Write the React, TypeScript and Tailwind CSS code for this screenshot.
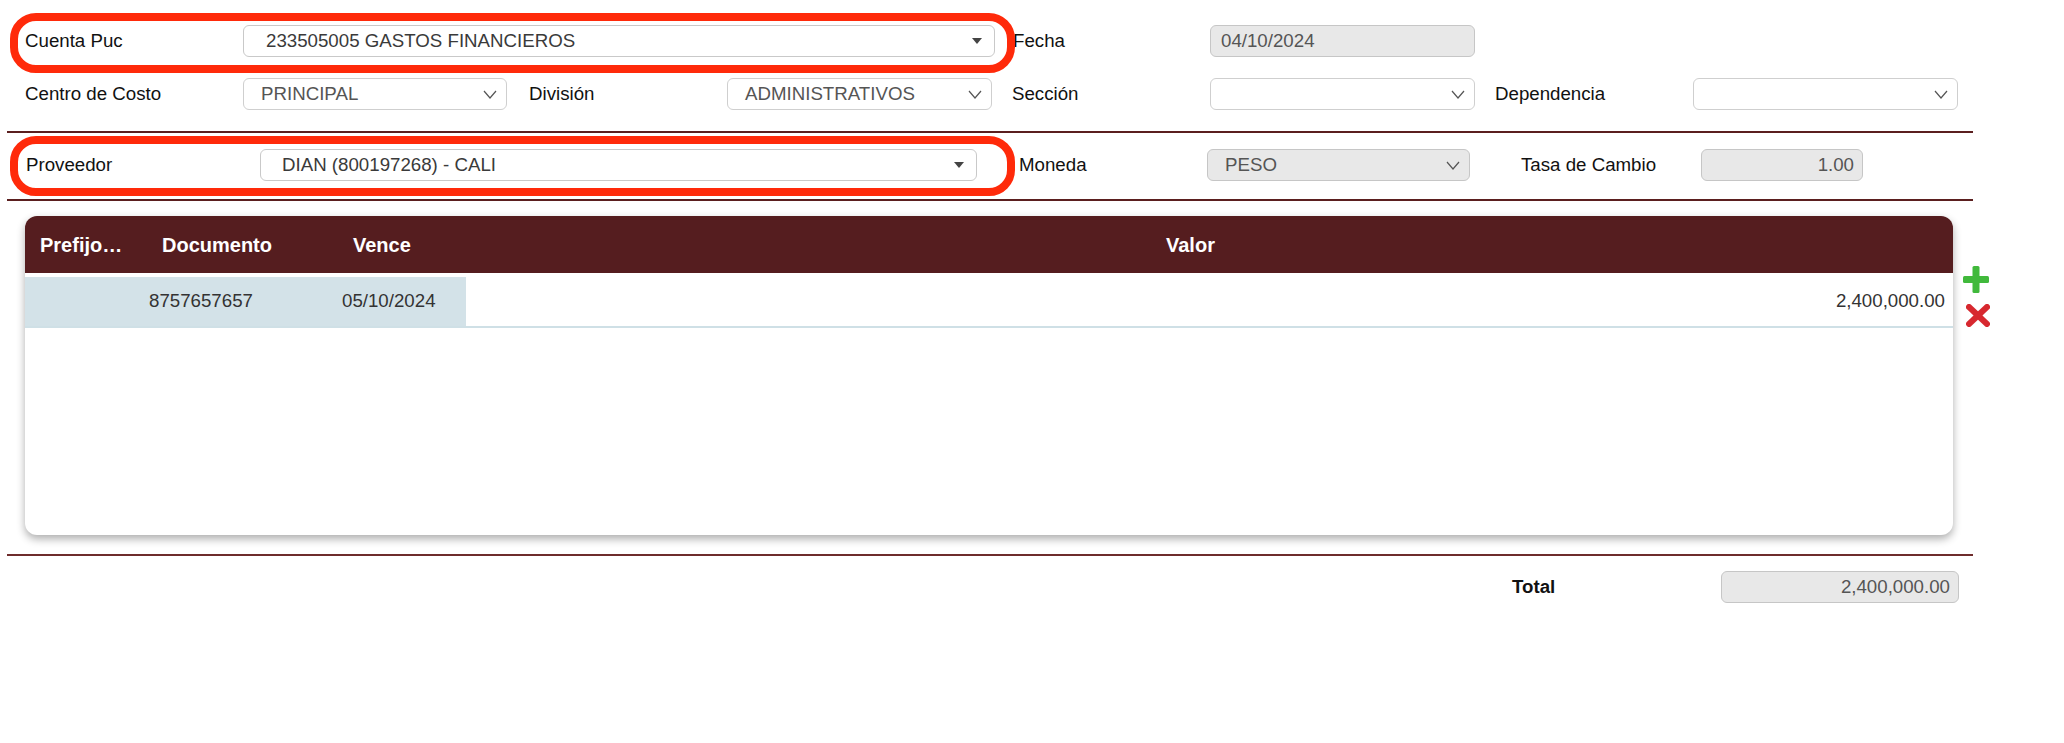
import React from "react";

function Label({ text, w, bold }: { text: string; w: number; bold?: boolean }) {
  return (
    <div style={{ width: w }} className={`shrink-0 text-[#111] ${bold ? "font-bold" : ""}`}>
      {text}
    </div>
  );
}

function Combo({ value, w, pl = 22 }: { value: string; w: number; pl?: number }) {
  return (
    <div
      style={{ width: w, paddingLeft: pl }}
      className="shrink-0 h-[32px] rounded-[6px] border border-[#c9c9c9] bg-white flex items-center justify-between pr-[12px] text-[#3a3a3a]"
    >
      <span>{value}</span>
      <svg width="10" height="6" viewBox="0 0 10 6">
        <polygon points="0,0 10,0 5,6" fill="#444" />
      </svg>
    </div>
  );
}

function Select({ value, w, disabled }: { value?: string; w: number; disabled?: boolean }) {
  return (
    <div
      style={{ width: w }}
      className={`shrink-0 h-[32px] rounded-[6px] border flex items-center justify-between pl-[17px] pr-[9px] text-[#555] ${
        disabled ? "bg-[#e8e8e8] border-[#c6c6c6]" : "bg-white border-[#cfcfcf]"
      }`}
    >
      <span>{value}</span>
      <svg width="14" height="9" viewBox="0 0 14 9">
        <polyline points="1,1 7,8 13,1" fill="none" stroke="#555" strokeWidth="1.2" />
      </svg>
    </div>
  );
}

function ReadInput({ value, w, right }: { value: string; w: number; right?: boolean }) {
  return (
    <div
      style={{ width: w }}
      className={`shrink-0 h-[32px] rounded-[6px] border border-[#c6c6c6] bg-[#e8e8e8] flex items-center px-[8px] text-[#555] ${
        right ? "justify-end" : "pl-[10px]"
      }`}
    >
      {value}
    </div>
  );
}

export default function App() {
  return (
    <div className="w-[2064px] h-[743px] bg-white font-['Liberation_Sans',Arial,sans-serif] text-[18.7px] leading-none">
      <div className="relative ml-[7px] w-[1966px]">
        {/* annotation boxes */}
        <div className="absolute left-[3px] top-[13px] w-[1005px] h-[60px] rounded-[26px] border-[8px] border-[#ff2a0a] pointer-events-none" />
        <div className="absolute left-[3px] top-[136px] w-[1005px] h-[60px] rounded-[26px] border-[8px] border-[#ff2a0a] pointer-events-none" />

        {/* Header fields */}
        <section className="pt-[25px] pb-[21px] pl-[18px] flex flex-col gap-[21px]">
          <div className="flex items-center">
            <Label text="Cuenta Puc" w={218} />
            <Combo value="233505005 GASTOS FINANCIEROS" w={752} />
            <div className="w-[18px] shrink-0" />
            <Label text="Fecha" w={197} />
            <ReadInput value="04/10/2024" w={265} />
          </div>
          <div className="flex items-center">
            <Label text="Centro de Costo" w={218} />
            <Select value="PRINCIPAL" w={264} />
            <div className="w-[22px] shrink-0" />
            <Label text="División" w={198} />
            <Select value="ADMINISTRATIVOS" w={265} />
            <div className="w-[20px] shrink-0" />
            <Label text="Sección" w={198} />
            <Select w={265} />
            <div className="w-[20px] shrink-0" />
            <Label text="Dependencia" w={198} />
            <Select w={265} />
          </div>
        </section>

        <div className="h-[2px] bg-[#5b1f1f]" />

        {/* Proveedor */}
        <section className="pt-[16px] pb-[18px] pl-[19px] flex items-center">
          <Label text="Proveedor" w={234} />
          <Combo value="DIAN (800197268) - CALI" w={717} pl={21} />
          <div className="w-[42px] shrink-0" />
          <Label text="Moneda" w={188} />
          <Select value="PESO" w={263} disabled />
          <div className="w-[51px] shrink-0" />
          <Label text="Tasa de Cambio" w={180} />
          <ReadInput value="1.00" w={162} right />
        </section>

        <div className="h-[2px] bg-[#5b1f1f]" />

        {/* Detail grid */}
        <section className="pt-[15px] pb-[19px] pl-[18px] flex">
          <div className="w-[1928px] h-[319px] shrink-0 rounded-[12px] bg-white shadow-[0_4px_9px_rgba(0,0,0,0.32)] overflow-hidden">
            <div className="h-[57px] bg-[#551d1f] text-white font-bold text-[20px] flex items-center">
              <div className="w-[115px] pl-[15px]">Prefijo…</div>
              <div className="w-[185px] pl-[22px]">Documento</div>
              <div className="w-[141px] pl-[28px]">Vence</div>
              <div className="flex-1 pl-[700px]">Valor</div>
            </div>
            <div className="mt-[4px] h-[51px] border-b-2 border-[#cfe0e6] flex items-center text-[#333]">
              <div className="w-[441px] h-full bg-[#d3e2e8] flex items-center">
                <div className="w-[115px]" />
                <div className="w-[185px] pl-[9px]">8757657657</div>
                <div className="w-[141px] pl-[17px]">05/10/2024</div>
              </div>
              <div className="flex-1 text-right pr-[8px]">2,400,000.00</div>
            </div>
          </div>
          <div className="ml-[10px] pt-[50px] shrink-0 flex flex-col gap-[11px]">
            <svg width="26" height="27" viewBox="0 0 26 27">
              <rect x="9.5" y="0" width="7" height="27" rx="1.5" fill="#41b93c" />
              <rect x="0" y="10" width="26" height="7" rx="1.5" fill="#41b93c" />
            </svg>
            <svg width="24" height="23" viewBox="0 0 24 23" className="ml-[3px]">
              <line x1="3" y1="3" x2="21" y2="20" stroke="#d7282f" strokeWidth="6" strokeLinecap="round" />
              <line x1="21" y1="3" x2="3" y2="20" stroke="#d7282f" strokeWidth="6" strokeLinecap="round" />
            </svg>
          </div>
        </section>

        <div className="h-[2px] bg-[#6e2c2c]" />

        {/* Total */}
        <section className="pt-[15px] flex items-center">
          <div className="w-[1505px] shrink-0" />
          <Label text="Total" w={209} bold />
          <ReadInput value="2,400,000.00" w={238} right />
        </section>
      </div>
    </div>
  );
}
